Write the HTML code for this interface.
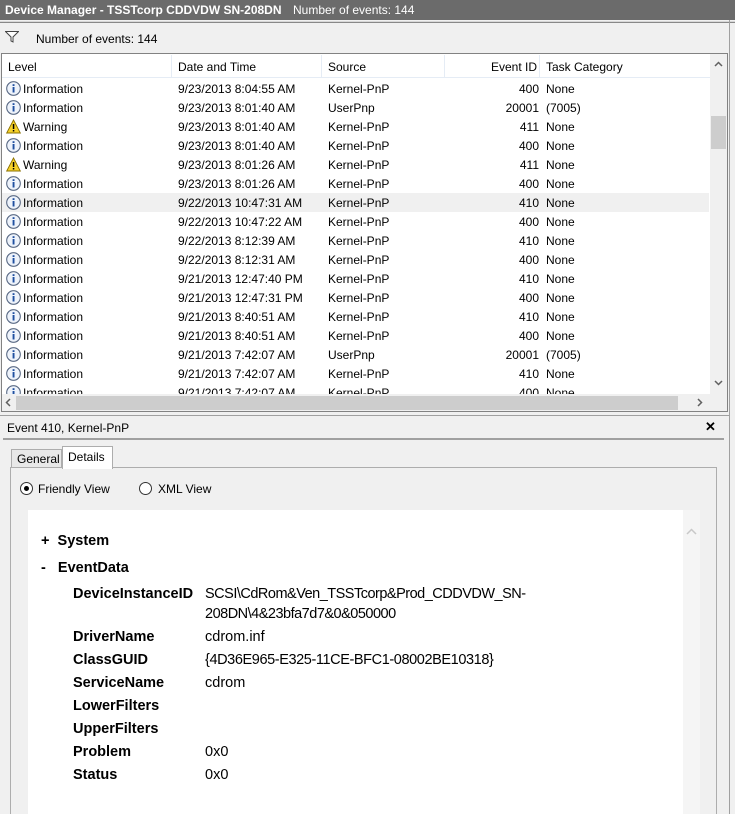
<!DOCTYPE html>
<html><head><style>
*{margin:0;padding:0;box-sizing:border-box}
html,body{width:735px;height:814px;overflow:hidden}
body{background:#f0f0f0;font-family:"Liberation Sans",sans-serif;font-size:12px;color:#000;position:relative}
.a{position:absolute;white-space:nowrap}
.row{position:absolute;left:3px;width:707px;height:19px}
.row span{position:absolute;top:3px}
.ic{position:absolute;left:4px;top:2px;width:15px;height:15px}
.k{font-size:14.5px;font-weight:bold;position:absolute;left:73px}
.v{font-size:14.5px;position:absolute;left:205px}
</style></head><body>
<div class="a" style="left:0;top:0;width:735px;height:20px;background:#6b6b6b"></div>
<div class="a" style="left:5px;top:3px;color:#fff;font-weight:bold;font-size:12px">Device Manager - TSSTcorp CDDVDW SN-208DN</div>
<div class="a" style="left:293px;top:3px;color:#fff;font-size:12px">Number of events: 144</div>
<div class="a" style="left:0;top:21px;width:735px;height:2px;background:#d8d8d8;border-bottom:1px solid #888"></div>
<svg class="a" style="left:5px;top:31px" width="14" height="12"><path d="M0.5 0.5H13.5L8 6V11L6 10V6Z" fill="#fff" stroke="#444"/></svg>
<div class="a" style="left:36px;top:32px">Number of events: 144</div>
<div class="a" style="left:1px;top:53px;width:727px;height:359px;border:1px solid #828282;background:#fff"></div>
<div class="a" style="left:2px;top:55px;width:708px;height:23px;border-bottom:1px solid #e5ecf5"></div>
<div class="a" style="left:171px;top:55px;width:1px;height:22px;background:#e5ecf5"></div>
<div class="a" style="left:321px;top:55px;width:1px;height:22px;background:#e5ecf5"></div>
<div class="a" style="left:444px;top:55px;width:1px;height:22px;background:#e5ecf5"></div>
<div class="a" style="left:539px;top:55px;width:1px;height:22px;background:#e5ecf5"></div>
<div class="a" style="left:8px;top:60px">Level</div>
<div class="a" style="left:178px;top:60px">Date and Time</div>
<div class="a" style="left:328px;top:60px">Source</div>
<div class="a" style="left:491px;top:60px">Event ID</div>
<div class="a" style="left:546px;top:60px">Task Category</div>
<div class="a" style="left:2px;top:79px;width:708px;height:315px;overflow:hidden">
<div id="rows"></div>
</div>
<div class="a" style="left:710px;top:54px;width:17px;height:340px;background:#f0f0f0"></div>
<div class="a" style="left:711px;top:116px;width:15px;height:33px;background:#cdcdcd"></div>
<svg class="a" style="left:714px;top:61px" width="9" height="6"><path d="M1 5L4.5 1.5L8 5" fill="none" stroke="#606060" stroke-width="1.5"/></svg>
<svg class="a" style="left:714px;top:380px" width="9" height="6"><path d="M1 1L4.5 4.5L8 1" fill="none" stroke="#606060" stroke-width="1.5"/></svg>
<div class="a" style="left:2px;top:394px;width:725px;height:17px;background:#f0f0f0"></div>
<div class="a" style="left:16px;top:396px;width:662px;height:14px;background:#cdcdcd"></div>
<svg class="a" style="left:5px;top:398px" width="6" height="9"><path d="M5 1L1.5 4.5L5 8" fill="none" stroke="#606060" stroke-width="1.5"/></svg>
<svg class="a" style="left:697px;top:398px" width="6" height="9"><path d="M1 1L4.5 4.5L1 8" fill="none" stroke="#606060" stroke-width="1.5"/></svg>
<div class="a" style="left:729px;top:20px;width:1px;height:794px;background:#a0a0a0"></div>
<div class="a" style="left:0;top:415px;width:729px;height:1px;background:#a0a0a0"></div>
<div class="a" style="left:7px;top:421px">Event 410, Kernel-PnP</div>
<div class="a" style="left:705px;top:419px;font-weight:bold;font-size:13px">✕</div>
<div class="a" style="left:3px;top:438px;width:721px;height:2px;background:#a0a0a0"></div>
<div class="a" style="left:10px;top:467px;width:707px;height:360px;border:1px solid #adadad;background:#f0f0f0"></div>
<div class="a" style="left:11px;top:449px;width:51px;height:19px;border:1px solid #adadad;background:#e8e8e8"></div>
<div class="a" style="left:17px;top:452px">General</div>
<div class="a" style="left:62px;top:446px;width:51px;height:23px;border:1px solid #adadad;border-bottom:none;background:#fff"></div>
<div class="a" style="left:68px;top:450px">Details</div>
<div class="a" style="left:20px;top:482px;width:13px;height:13px;border:1px solid #333;border-radius:50%;background:#fff"></div>
<div class="a" style="left:24px;top:486px;width:5px;height:5px;border-radius:50%;background:#000"></div>
<div class="a" style="left:38px;top:482px">Friendly View</div>
<div class="a" style="left:139px;top:482px;width:13px;height:13px;border:1px solid #333;border-radius:50%;background:#fff"></div>
<div class="a" style="left:158px;top:482px">XML View</div>
<div class="a" style="left:28px;top:510px;width:655px;height:304px;background:#fff"></div>
<div class="a" style="left:683px;top:510px;width:17px;height:304px;background:#f5f5f5"></div>
<svg class="a" style="left:686px;top:528px" width="11" height="7"><path d="M1 6L5.5 1.5L10 6" fill="none" stroke="#c8c8c8" stroke-width="1.5"/></svg>
<div class="a" style="left:41px;top:533px;font-size:14.5px;font-weight:bold">+&nbsp;&nbsp;System</div>
<div class="a" style="left:41px;top:560px;font-size:14.5px;font-weight:bold">-&nbsp;&nbsp;&nbsp;EventData</div>
<div class="a k" style="top:586px">DeviceInstanceID</div>
<div class="a v" style="top:586px;letter-spacing:-0.5px">SCSI\CdRom&amp;Ven_TSSTcorp&amp;Prod_CDDVDW_SN-</div>
<div class="a v" style="top:606px;letter-spacing:-0.5px">208DN\4&amp;23bfa7d7&amp;0&amp;050000</div>
<div class="a k" style="top:629px">DriverName</div><div class="a v" style="top:629px">cdrom.inf</div>
<div class="a k" style="top:652px">ClassGUID</div><div class="a v" style="top:652px;letter-spacing:-0.4px">{4D36E965-E325-11CE-BFC1-08002BE10318}</div>
<div class="a k" style="top:675px">ServiceName</div><div class="a v" style="top:675px">cdrom</div>
<div class="a k" style="top:698px">LowerFilters</div>
<div class="a k" style="top:721px">UpperFilters</div>
<div class="a k" style="top:744px">Problem</div><div class="a v" style="top:744px">0x0</div>
<div class="a k" style="top:767px">Status</div><div class="a v" style="top:767px">0x0</div>
<script>
var d=[["I","9/23/2013 8:04:55 AM","Kernel-PnP","400","None"],["I","9/23/2013 8:01:40 AM","UserPnp","20001","(7005)"],["W","9/23/2013 8:01:40 AM","Kernel-PnP","411","None"],["I","9/23/2013 8:01:40 AM","Kernel-PnP","400","None"],["W","9/23/2013 8:01:26 AM","Kernel-PnP","411","None"],["I","9/23/2013 8:01:26 AM","Kernel-PnP","400","None"],["I","9/22/2013 10:47:31 AM","Kernel-PnP","410","None"],["I","9/22/2013 10:47:22 AM","Kernel-PnP","400","None"],["I","9/22/2013 8:12:39 AM","Kernel-PnP","410","None"],["I","9/22/2013 8:12:31 AM","Kernel-PnP","400","None"],["I","9/21/2013 12:47:40 PM","Kernel-PnP","410","None"],["I","9/21/2013 12:47:31 PM","Kernel-PnP","400","None"],["I","9/21/2013 8:40:51 AM","Kernel-PnP","410","None"],["I","9/21/2013 8:40:51 AM","Kernel-PnP","400","None"],["I","9/21/2013 7:42:07 AM","UserPnp","20001","(7005)"],["I","9/21/2013 7:42:07 AM","Kernel-PnP","410","None"],["I","9/21/2013 7:42:07 AM","Kernel-PnP","400","None"]];
var h="";
var info='<svg class="ic" viewBox="0 0 15 15"><circle cx="7.5" cy="7.5" r="6.8" fill="#eef3fb" stroke="#5a6a85" stroke-width="1.1"/><rect x="6.6" y="6" width="1.9" height="5.5" fill="#1f4fa0"/><rect x="6.6" y="3.2" width="1.9" height="1.8" fill="#1f4fa0"/></svg>';
var warn='<svg class="ic" viewBox="0 0 15 15"><path d="M7.5 1L14.3 14H0.7Z" fill="#f7d22a" stroke="#8a7000" stroke-width="0.9"/><rect x="6.8" y="5" width="1.5" height="5" fill="#000"/><rect x="6.8" y="11" width="1.5" height="1.5" fill="#000"/></svg>';
d.forEach(function(r,i){h+='<div class="row" style="left:0;top:'+(i*19)+'px;'+(i==6?'background:#f0f0f0;':'')+'">'+(r[0]=="I"?info:warn)+'<span style="left:21px">'+(r[0]=="I"?"Information":"Warning")+'</span><span style="left:176px">'+r[1]+'</span><span style="left:326px">'+r[2]+'</span><span style="right:170px">'+r[3]+'</span><span style="left:544px">'+r[4]+'</span></div>';});
document.getElementById("rows").innerHTML=h;
</script>
</body></html>
